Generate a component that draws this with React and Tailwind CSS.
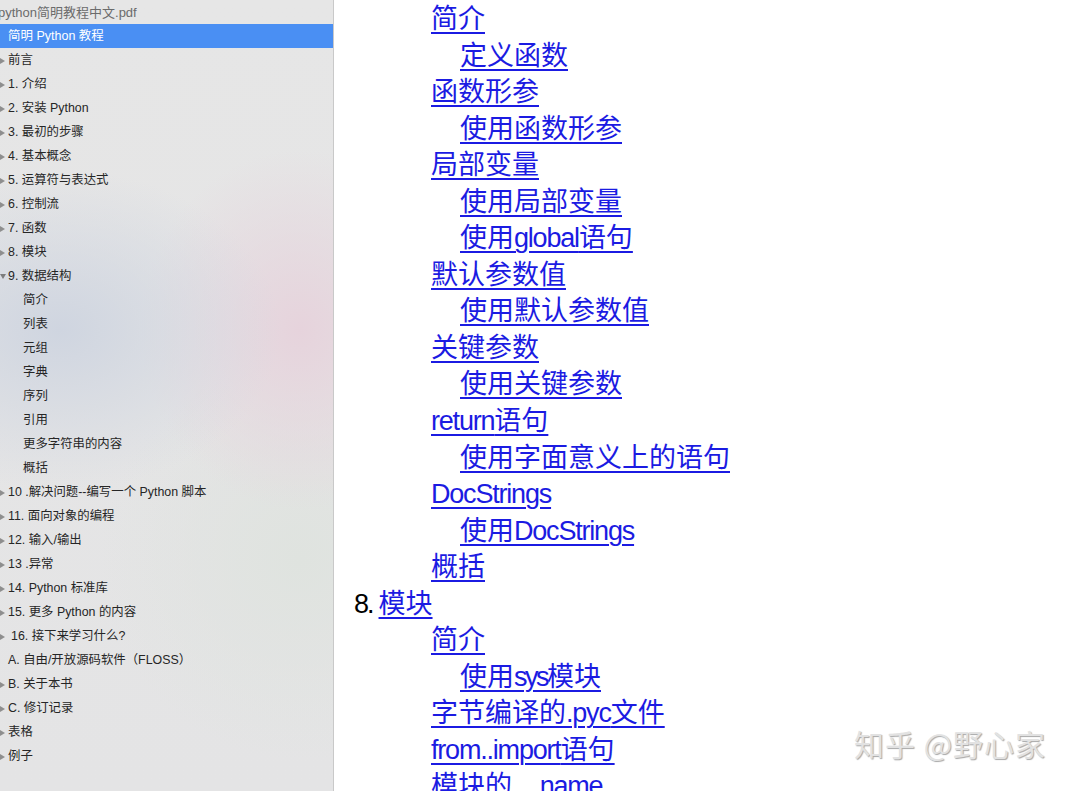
import React from 'react';

const tocItems = [
  { text: '前言', arrow: 'right' },
  { text: '1. 介绍', arrow: 'right' },
  { text: '2. 安装 Python', arrow: 'right' },
  { text: '3. 最初的步骤', arrow: 'right' },
  { text: '4. 基本概念', arrow: 'right' },
  { text: '5. 运算符与表达式', arrow: 'right' },
  { text: '6. 控制流', arrow: 'right' },
  { text: '7. 函数', arrow: 'right' },
  { text: '8. 模块', arrow: 'right' },
  { text: '9. 数据结构', arrow: 'down' },
  { text: '简介', child: true },
  { text: '列表', child: true },
  { text: '元组', child: true },
  { text: '字典', child: true },
  { text: '序列', child: true },
  { text: '引用', child: true },
  { text: '更多字符串的内容', child: true },
  { text: '概括', child: true },
  { text: '10 .解决问题--编写一个 Python 脚本', arrow: 'right' },
  { text: '11. 面向对象的编程', arrow: 'right' },
  { text: '12. 输入/输出', arrow: 'right' },
  { text: '13 .异常', arrow: 'right' },
  { text: '14. Python 标准库', arrow: 'right' },
  { text: '15. 更多 Python 的内容', arrow: 'right' },
  { text: ' 16. 接下来学习什么?', arrow: 'right', extra: true },
  { text: 'A. 自由/开放源码软件（FLOSS）' },
  { text: 'B. 关于本书', arrow: 'right' },
  { text: 'C. 修订记录', arrow: 'right' },
  { text: '表格', arrow: 'right' },
  { text: '例子', arrow: 'right' },
];

const links = [
  { text: '简介', level: 1 },
  { text: '定义函数', level: 2 },
  { text: '函数形参', level: 1 },
  { text: '使用函数形参', level: 2 },
  { text: '局部变量', level: 1 },
  { text: '使用局部变量', level: 2 },
  { text: '使用global语句', level: 2 },
  { text: '默认参数值', level: 1 },
  { text: '使用默认参数值', level: 2 },
  { text: '关键参数', level: 1 },
  { text: '使用关键参数', level: 2 },
  { text: 'return语句', level: 1 },
  { text: '使用字面意义上的语句', level: 2 },
  { text: 'DocStrings', level: 1 },
  { text: '使用DocStrings', level: 2 },
  { text: '概括', level: 1 },
  { text: '模块', level: 0, num: '8.' },
  { text: '简介', level: 1 },
  { text: '使用sys模块', level: 2 },
  { text: '字节编译的.pyc文件', level: 1 },
  { text: 'from..import语句', level: 1 },
  { text: '模块的__name__', level: 1 },
];

function Arrow({ dir }) {
  if (!dir) return <span className="w-[8px] shrink-0" />;
  return (
    <span className="w-[8px] shrink-0 flex items-center">
      {dir === 'down' ? (
        <svg width="6" height="5" viewBox="0 0 6 5">
          <path d="M0 0 L6 0 L3 5 Z" fill="#7d7d7d" />
        </svg>
      ) : (
        <svg width="5" height="6" viewBox="0 0 5 6">
          <path d="M0 0 L5 3 L0 6 Z" fill="#8e8e8e" />
        </svg>
      )}
    </span>
  );
}

// latin runs are drawn tighter than the CJK ones
function Mixed({ text }) {
  const parts = text.match(/[A-Za-z0-9._]+|[^A-Za-z0-9._]+/g) || [];
  return parts.map((p, i) =>
    /[A-Za-z0-9._]/.test(p[0]) ? (
      <span key={i} className={p === 'sys' ? 'tracking-[-2.5px]' : 'tracking-[-1.2px]'}>{p}</span>
    ) : (
      <span key={i}>{p}</span>
    )
  );
}

function Sidebar() {
  return (
    <div
      className="w-[334px] shrink-0 h-full pt-[1px] border-r border-[#c9c9c9] text-[12.4px] text-[#262626] overflow-hidden
        bg-[radial-gradient(ellipse_220px_160px_at_60px_330px,#cfd5e0_0%,transparent_100%),radial-gradient(ellipse_160px_180px_at_300px_330px,#e6d3dc_0%,transparent_100%),radial-gradient(ellipse_200px_200px_at_300px_560px,#dfe3df_0%,transparent_100%),linear-gradient(#e6e6e6,#e4e4e5)]"
      style={{ fontFamily: '"Liberation Sans", "Noto Sans CJK SC", sans-serif' }}
    >
      <div className="h-[23px] flex items-center -ml-[2px] text-[13px] text-[#6b6b6b]">
        python简明教程中文.pdf
      </div>
      <div className="h-[24px] flex items-center pl-[8px] bg-[#4a8ff3] text-white text-[12.5px]">
        简明 Python 教程
      </div>
      {tocItems.map((item, i) => (
        <div key={i} className="h-[24px] flex items-center pt-[1px]">
          {item.child ? (
            <span className="pl-[23px]">{item.text}</span>
          ) : (
            <>
              <Arrow dir={item.arrow} />
              <span className={item.extra ? 'pl-[3px]' : ''}>{item.text.trim()}</span>
            </>
          )}
        </div>
      ))}
    </div>
  );
}

function Content() {
  return (
    <div
      className="relative flex-1 h-full bg-white overflow-hidden pt-[1px] pl-[20px] text-[27px] leading-[36.55px] text-[#1b1be2]"
      style={{ fontFamily: '"Liberation Sans", "Noto Sans CJK SC", sans-serif' }}
    >
      {links.map((l, i) => (
        <div
          key={i}
          className={
            'whitespace-nowrap ' +
            (l.level === 0 ? 'pl-0' : l.level === 1 ? 'pl-[77px]' : 'pl-[106px]')
          }
        >
          {l.num && <span className="text-black tracking-[-2px] mr-[6px]">{l.num}</span>}
          <a className="underline underline-offset-[4px] decoration-[1.5px]">
            <Mixed text={l.text} />
          </a>
        </div>
      ))}
      <div
        className="absolute left-[520px] top-[725px] text-[30px] text-[#e2e2e2] tracking-[1px] [text-shadow:1px_1px_1px_#a8a8a8,-1px_-1px_0_#ffffff]"
        style={{ fontFamily: '"Noto Sans CJK SC", sans-serif' }}
      >
        知乎 @野心家
      </div>
    </div>
  );
}

export default function App() {
  return (
    <div className="w-[1080px] h-[791px] flex overflow-hidden">
      <Sidebar />
      <Content />
    </div>
  );
}
